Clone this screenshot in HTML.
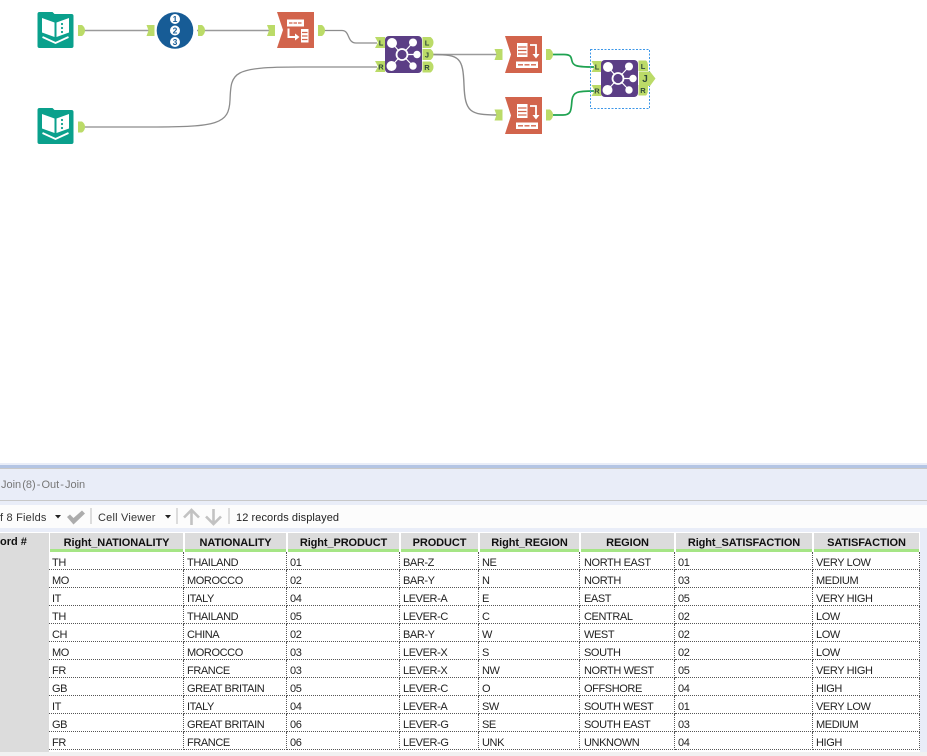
<!DOCTYPE html>
<html><head><meta charset="utf-8">
<style>
html,body{margin:0;padding:0;background:#fff;}
body{width:927px;height:756px;position:relative;overflow:hidden;font-family:"Liberation Sans",sans-serif;font-size:11px;color:#222;}
.a{position:absolute;}
.t{position:absolute;white-space:nowrap;line-height:14px;}
.h{position:absolute;top:533px;height:16px;background:#dcdcdc;border-bottom:3px solid #a5e585;text-align:center;font-weight:bold;line-height:20px;color:#111;white-space:nowrap;letter-spacing:-.1px;}
table{position:absolute;left:49px;top:552px;border-collapse:separate;border-spacing:0;table-layout:fixed;width:871px;}
td{box-sizing:border-box;height:18px;padding:5px 0 0 3px;vertical-align:top;border-right:1px dotted #555;border-bottom:1px dotted #555;white-space:nowrap;overflow:hidden;line-height:12px;color:#222;letter-spacing:-.4px;}
td:nth-child(6){padding-left:4px;}
svg text{font-family:"Liberation Sans",sans-serif;font-weight:bold;font-size:7.5px;fill:#2f4a3a;text-anchor:middle;}
</style></head><body>

<svg class="a" style="left:0;top:0" width="927" height="463" viewBox="0 0 927 463">
<defs>
<g id="book">
<path d="M0 2Q0 0 2 0H15L17 2H34Q36 2 36 4V34Q36 36 34 36H2Q0 36 0 34Z" fill="#0aa08c"/>
<path d="M4.500 6L17 10.500V25L4.500 20.500Z" fill="#fff"/>
<path d="M19 10.500L31.500 6V20.500L19 25Z" fill="#fff"/>
<circle cx="24.500" cy="12" r="1.100" fill="#0aa08c"/><circle cx="24.500" cy="16" r="1.100" fill="#0aa08c"/><circle cx="24.500" cy="20" r="1.100" fill="#0aa08c"/>
<path d="M5 25L18 31L31 25" fill="none" stroke="#fff" stroke-width="1.800"/>
</g>
<g id="join">
<rect x="0" y="0" width="37" height="37" rx="4" fill="#5b3e85"/>
<path d="M17 18.500L7 7M17 18.500L6.500 30M17 18.500L28 6.500M17 18.500H32M17 18.500L28 30" stroke="#fff" stroke-width="1.200"/>
<circle cx="7" cy="7" r="5" fill="#fff"/><circle cx="6.500" cy="30" r="5" fill="#fff"/>
<circle cx="28" cy="6.500" r="4" fill="#fff"/><circle cx="32" cy="18.500" r="3.700" fill="#fff"/><circle cx="28" cy="30" r="3.700" fill="#fff"/>
<circle cx="17" cy="18.500" r="5.500" fill="#5b3e85" stroke="#fff" stroke-width="1.800"/>
</g>
<g id="sel">
<path d="M0 0H37V37H0L6 18.500Z" fill="#d2644c"/>
<rect x="12" y="7" width="10.500" height="14" fill="#fff"/>
<path d="M13 11H21.500M13 14.500H21.500M13 18H21.500" stroke="#d2644c" stroke-width="1.200"/>
<path d="M25 9H31V19" fill="none" stroke="#fff" stroke-width="1.800"/>
<path d="M27.500 18H34.500L31 22.500Z" fill="#fff"/>
<rect x="11" y="25.500" width="22" height="6.500" fill="#fff"/>
<path d="M13 28.800H31" stroke="#d2644c" stroke-width="1.300" stroke-dasharray="5 1.500"/>
</g>
<path id="in" d="M0 0H8V11H0L2 5.500Z" fill="#bbdb68"/>
<path id="out" d="M0 0H4Q7 2 7 5.500Q7 9 4 11H0Z" fill="#bbdb68"/>
<path id="lin" d="M0 0H10V11H0L3 5.500Z" fill="#bbdb68"/>
<path id="lout" d="M0 0H8Q11 2 11 5.500Q11 9 8 11H0Z" fill="#bbdb68"/>
</defs>

<!-- wires -->
<g fill="none" stroke="#9a9a9a" stroke-width="1.600">
<path d="M84 30.500H149"/>
<path d="M197 30.500H271"/>
<path d="M324 30.500H342C350 30.500 347 43 356 43H377" stroke="#8c8c8c" stroke-width="1.300"/>
<path d="M84 127H150C218 127 229 124 230 100C231 72 232 67 300 67H377" stroke="#8c8c8c" stroke-width="1.300"/>
<path d="M433 54.500H497"/>
<path d="M433 54.500C460 54.500 463 58 464 85C465 112 470 115 497 115" stroke="#8c8c8c" stroke-width="1.400"/>
</g>
<g fill="none" stroke="#1fa251" stroke-width="1.700">
<path d="M553 54.500H564C572 54.500 571 58 572 61C573 66 577 67 594 67"/>
<path d="M553 115H563C572 115 571 109 572 100C573 92 577 91 594 91"/>
</g>

<!-- tools -->
<use href="#book" x="37.500" y="12"/>
<use href="#book" x="37.500" y="108"/>
<circle cx="175" cy="30.500" r="18.300" fill="#175c96"/>
<circle cx="175" cy="19" r="5" fill="#fff"/><circle cx="175" cy="30.500" r="5" fill="#fff"/><circle cx="175" cy="42" r="5" fill="#fff"/>
<text x="175" y="22" style="font-size:8.500px;fill:#175c96">1</text>
<text x="175" y="33.500" style="font-size:8.500px;fill:#175c96">2</text>
<text x="175" y="45" style="font-size:8.500px;fill:#175c96">3</text>

<!-- formula-like tool -->
<path d="M277 12H314V48H277L283 30Z" fill="#d2644c"/>
<rect x="287" y="19.500" width="17" height="7" fill="#fff"/>
<path d="M289 23H302" stroke="#d2644c" stroke-width="1.300" stroke-dasharray="3.500 1"/>
<path d="M288.500 28.500V37H296" fill="none" stroke="#fff" stroke-width="2"/>
<path d="M295 33.500V40.500L299.500 37Z" fill="#fff"/>
<rect x="301" y="29" width="7.500" height="13.500" fill="#fff"/>
<path d="M302 32.500H307.500M302 36H307.500M302 39.500H307.500" stroke="#d2644c" stroke-width="1.200"/>

<use href="#sel" x="505" y="36"/>
<use href="#sel" x="505" y="97"/>
<use href="#join" x="385" y="36"/>

<!-- anchors -->
<use href="#out" x="78" y="25"/>
<use href="#in" x="146.500" y="25"/>
<use href="#out" x="198" y="25"/>
<use href="#in" x="267" y="25"/>
<use href="#out" x="318" y="25"/>
<use href="#out" x="78" y="121.500"/>
<use href="#lin" x="375" y="37"/><text x="381" y="45.500">L</text>
<use href="#lin" x="375" y="61"/><text x="381" y="69.500">R</text>
<use href="#lout" x="422.500" y="37"/><text x="427" y="45.500">L</text>
<use href="#lout" x="422.500" y="49"/><text x="427" y="57.500">J</text>
<use href="#lout" x="422.500" y="61.500"/><text x="427" y="70">R</text>
<use href="#in" x="494.500" y="49"/>
<use href="#in" x="494.500" y="109.500"/>
<use href="#out" x="546" y="49"/>
<use href="#out" x="546" y="109.500"/>

<!-- selected join -->
<rect x="590.500" y="49.500" width="59" height="59" fill="none" stroke="#3d97e8" stroke-width="1" stroke-dasharray="2 1.500"/>
<use href="#lin" x="591.500" y="61"/><text x="597" y="69.500">L</text>
<use href="#lin" x="591.500" y="85"/><text x="597" y="93.500">R</text>
<use href="#join" x="601" y="60"/>
<path d="M638.500 60.500H646Q648 62 648 66V71H638.500Z" fill="#bbdb68"/><text x="643" y="69">L</text>
<path d="M638.500 85H648V89Q648 94 646 95.500H638.500Z" fill="#bbdb68"/><text x="643" y="93">R</text>
<path d="M639 71.500H650L655.500 78.500L650 86H639Z" fill="#bbdb68"/>
<text x="645" y="82" style="font-size:10px">J</text>
</svg>

<!-- results panel -->
<div class="a" style="left:0;top:463px;width:927px;height:293px;background:#e9edf8"></div>
<div class="a" style="left:0;top:465px;width:927px;height:3px;background:#b4c5e4"></div>
<div class="a" style="left:0;top:468px;width:927px;height:1px;background:#c8c8c8"></div>
<div class="a" style="left:0;top:500px;width:927px;height:1px;background:#c8c8c8"></div>
<div class="t" style="left:1px;top:478px;color:#777;word-spacing:-2px">Join (8) - Out - Join</div>

<div class="a" style="left:0;top:505px;width:927px;height:23px;background:#fcfcfc"></div>
<div class="t" style="left:0;top:511px;letter-spacing:.2px;color:#333">f 8 Fields</div>
<svg class="a" style="left:0;top:505px" width="240" height="23" viewBox="0 0 240 23">
<path d="M55 10H61L58 13.500Z" fill="#222"/>
<path d="M67 12L70 9.500L73.500 13L82 5.500L85 8.500L73.500 19.500Z" fill="#acacac"/>
<path d="M91 3V19M177 3V19M229 3V19" stroke="#bbb"/>
<path d="M165 10H171L168 13.500Z" fill="#222"/>
<path d="M191.500 20V6M184 12.500L191.500 5L199 12.500" fill="none" stroke="#c2c2c2" stroke-width="2.600"/>
<path d="M213.500 4V18M206 11.500L213.500 19L221 11.500" fill="none" stroke="#c2c2c2" stroke-width="2.600"/>
</svg>
<div class="t" style="left:98px;top:511px;letter-spacing:.2px;color:#333">Cell Viewer</div>
<div class="t" style="left:236px;top:511px;letter-spacing:.08px;color:#222">12 records displayed</div>

<div class="a" style="left:0;top:532px;width:920px;height:220px;background:#fff"></div>
<div class="a" style="left:0;top:533px;width:49px;height:219px;background:#dcdcdc"></div>
<div class="t" style="left:0;top:535px;font-weight:bold;color:#111">ord #</div>

<div class="h" style="left:50px;width:133px">Right_NATIONALITY</div>
<div class="h" style="left:185px;width:101px">NATIONALITY</div>
<div class="h" style="left:288px;width:111px">Right_PRODUCT</div>
<div class="h" style="left:401px;width:77px">PRODUCT</div>
<div class="h" style="left:480px;width:99px">Right_REGION</div>
<div class="h" style="left:581px;width:93px">REGION</div>
<div class="h" style="left:676px;width:136px">Right_SATISFACTION</div>
<div class="h" style="left:814px;width:105px">SATISFACTION</div>

<table>
<colgroup><col style="width:135px"><col style="width:103px"><col style="width:113px"><col style="width:79px"><col style="width:101px"><col style="width:95px"><col style="width:138px"><col style="width:107px"></colgroup>
<tr><td>TH</td><td>THAILAND</td><td>01</td><td>BAR-Z</td><td>NE</td><td>NORTH EAST</td><td>01</td><td>VERY LOW</td></tr>
<tr><td>MO</td><td>MOROCCO</td><td>02</td><td>BAR-Y</td><td>N</td><td>NORTH</td><td>03</td><td>MEDIUM</td></tr>
<tr><td>IT</td><td>ITALY</td><td>04</td><td>LEVER-A</td><td>E</td><td>EAST</td><td>05</td><td>VERY HIGH</td></tr>
<tr><td>TH</td><td>THAILAND</td><td>05</td><td>LEVER-C</td><td>C</td><td>CENTRAL</td><td>02</td><td>LOW</td></tr>
<tr><td>CH</td><td>CHINA</td><td>02</td><td>BAR-Y</td><td>W</td><td>WEST</td><td>02</td><td>LOW</td></tr>
<tr><td>MO</td><td>MOROCCO</td><td>03</td><td>LEVER-X</td><td>S</td><td>SOUTH</td><td>02</td><td>LOW</td></tr>
<tr><td>FR</td><td>FRANCE</td><td>03</td><td>LEVER-X</td><td>NW</td><td>NORTH WEST</td><td>05</td><td>VERY HIGH</td></tr>
<tr><td>GB</td><td>GREAT BRITAIN</td><td>05</td><td>LEVER-C</td><td>O</td><td>OFFSHORE</td><td>04</td><td>HIGH</td></tr>
<tr><td>IT</td><td>ITALY</td><td>04</td><td>LEVER-A</td><td>SW</td><td>SOUTH WEST</td><td>01</td><td>VERY LOW</td></tr>
<tr><td>GB</td><td>GREAT BRITAIN</td><td>06</td><td>LEVER-G</td><td>SE</td><td>SOUTH EAST</td><td>03</td><td>MEDIUM</td></tr>
<tr><td>FR</td><td>FRANCE</td><td>06</td><td>LEVER-G</td><td>UNK</td><td>UNKNOWN</td><td>04</td><td>HIGH</td></tr>
</table>
<div class="a" style="left:0;top:752px;width:927px;height:4px;background:#f1f1f1"></div>
</body></html>
